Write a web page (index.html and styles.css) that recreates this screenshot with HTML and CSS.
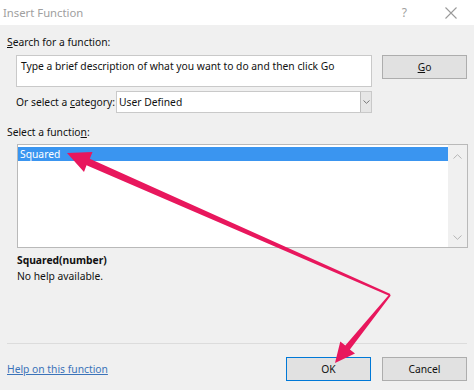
FILE: index.html
```html
<html lang="en">
<head>
    <meta charset="UTF-8">
    <title>Insert Function</title>
    <link rel="stylesheet" href="styles.css">
</head>
<body>
    <div class="dialog">
        <div class="titlebar">
            <span class="title">Insert Function</span>
            <div class="title-buttons">
                <span class="help">?</span>
                <svg class="close" width="12" height="12" viewBox="0 0 12 12">
                    <path d="M0.5 0.5 L11.5 11.5 M11.5 0.5 L0.5 11.5" stroke="#9a9a9a" stroke-width="1.1" fill="none"/>
                </svg>
            </div>
        </div>
        <div class="content">
            <div class="label search-label"><u>S</u>earch for a function:</div>
            <div class="search-row">
                <div class="search-box">Type a brief description of what you want to do and then click Go</div>
                <div class="button">
                    <span><u>G</u>o</span>
                </div>
            </div>
            <div class="category-row">
                <span class="label">Or select a <u>c</u>ategory:</span>
                <div class="select">
                    <span class="select-value">User Defined</span>
                    <div class="select-arrow">
                        <svg width="7" height="4" viewBox="0 0 7 4"><path d="M0.5 0.5 L3.5 3.3 L6.5 0.5" stroke="#777" fill="none"/></svg>
                    </div>
                </div>
            </div>
            <div class="label select-label">Select a functio<u>n</u>:</div>
            <div class="listbox">
                <div class="list-items">
                    <div class="list-item is-selected">Squared</div>
                </div>
                <div class="scrollbar">
                    <svg width="9" height="5" viewBox="0 0 9 5"><path d="M0.5 4.5 L4.5 0.7 L8.5 4.5" stroke="#b5b5b5" fill="none"/></svg>
                    <svg width="9" height="5" viewBox="0 0 9 5"><path d="M0.5 0.5 L4.5 4.3 L8.5 0.5" stroke="#b5b5b5" fill="none"/></svg>
                </div>
            </div>
            <div class="syntax">Squared(number)</div>
            <div class="description">No help available.</div>
        </div>
        <div class="separator"></div>
        <div class="footer">
            <a href="#" class="help-link">Help on this function</a>
            <div class="footer-buttons">
                <div class="button is-default">OK</div>
                <div class="button">Cancel</div>
            </div>
        </div>
        <svg class="arrow" width="474" height="390" viewBox="0 0 474 390">
            <polygon points="67,153 92.5,152 89.8,158.8 390.4,294.1 389.6,295.9 86.5,165.2 84,172" fill="#e8175d"/>
            <polygon points="335,363 340.3,341.5 345.3,345.6 389.2,294.4 390.8,295.6 349.9,349.4 355,353.5" fill="#e8175d"/>
        </svg>
    </div>
</body>
</html>
```

FILE: styles.css
```css
html,body {
    height: 100%;
}
body {
    margin: 0;
    background: #f0f0f0;
}
* {
    box-sizing: border-box;
}
.dialog {
    position: relative;
    width: 474px;
    height: 390px;
    background: #f0f0f0;
    font-family: "Noto Sans", "Open Sans", sans-serif;
    font-size: 10.3px;
    color: #111;
    overflow: hidden;
}
.titlebar {
    height: 25px;
    background: #fff;
    display: flex;
    align-items: center;
    justify-content: space-between;
    padding: 0 17px 0 3px;
}
.title {
    font-size: 11.3px;
    color: #a0a0a0;
}
.title-buttons {
    display: flex;
    align-items: center;
    gap: 38px;
}
.help {
    font-size: 12px;
    color: #a0a0a0;
}
.content {
    padding: 0 7px;
    display: flex;
    flex-direction: column;
}
.label {
    line-height: 16px;
    white-space: nowrap;
}
.search-label {
    margin-top: 9px;
}
.search-row {
    margin-top: 5px;
    display: flex;
    align-items: flex-start;
    gap: 10px;
    padding-left: 9px;
}
.search-box {
    flex-shrink: 0;
    width: 356px;
    height: 32px;
    background: #fff;
    border: 1px solid #c9c9c9;
    padding: 2px 4px;
    line-height: 16px;
    white-space: nowrap;
}
.button {
    flex-shrink: 0;
    width: 85px;
    height: 24px;
    background: #e1e1e1;
    border: 1px solid #adadad;
    display: flex;
    align-items: center;
    justify-content: center;
    color: #111;
}
.button.is-default {
    border-color: #0078d7;
}
.category-row {
    margin-top: 4px;
    display: flex;
    align-items: center;
    justify-content: space-between;
    width: 365px;
    padding-left: 9px;
}
.select {
    flex-shrink: 0;
    width: 256px;
    height: 22px;
    background: #fff;
    border: 1px solid #c9c9c9;
    display: flex;
    align-items: stretch;
}
.select-value {
    flex: 1;
    padding-left: 2px;
    line-height: 20px;
}
.select-arrow {
    width: 11px;
    background: #e6e6e6;
    border-left: 1px solid #bdbdbd;
    display: flex;
    align-items: center;
    justify-content: center;
}
.select-label {
    margin-top: 11px;
}
.listbox {
    margin: 4px 0 0 10px;
    width: 451px;
    height: 104px;
    background: #fff;
    border: 1px solid #b9b9b9;
    display: flex;
}
.list-items {
    flex: 1;
    padding: 2px 0 0 0;
}
.list-item {
    height: 14px;
    line-height: 14px;
    padding-left: 2px;
}
.list-item.is-selected {
    background: #3a95f0;
    color: #fff;
}
.scrollbar {
    width: 19px;
    background: #f0f0f0;
    display: flex;
    flex-direction: column;
    justify-content: space-between;
    align-items: center;
    padding: 9px 0 7px 0;
}
.syntax {
    margin: 4px 0 0 10px;
    font-weight: bold;
    line-height: 16px;
}
.description {
    margin-left: 10px;
    line-height: 17px;
}
.separator {
    margin: 58px 7px 0 7px;
    height: 1px;
    background: #dcdcdc;
}
.footer {
    margin-top: 13px;
    padding: 0 7px;
    display: flex;
    justify-content: space-between;
    align-items: center;
}
.help-link {
    color: #3b73b9;
    text-decoration: underline;
}
.footer-buttons {
    display: flex;
    gap: 11px;
}
.arrow {
    position: absolute;
    top: 0;
    left: 0;
    pointer-events: none;
}
```
